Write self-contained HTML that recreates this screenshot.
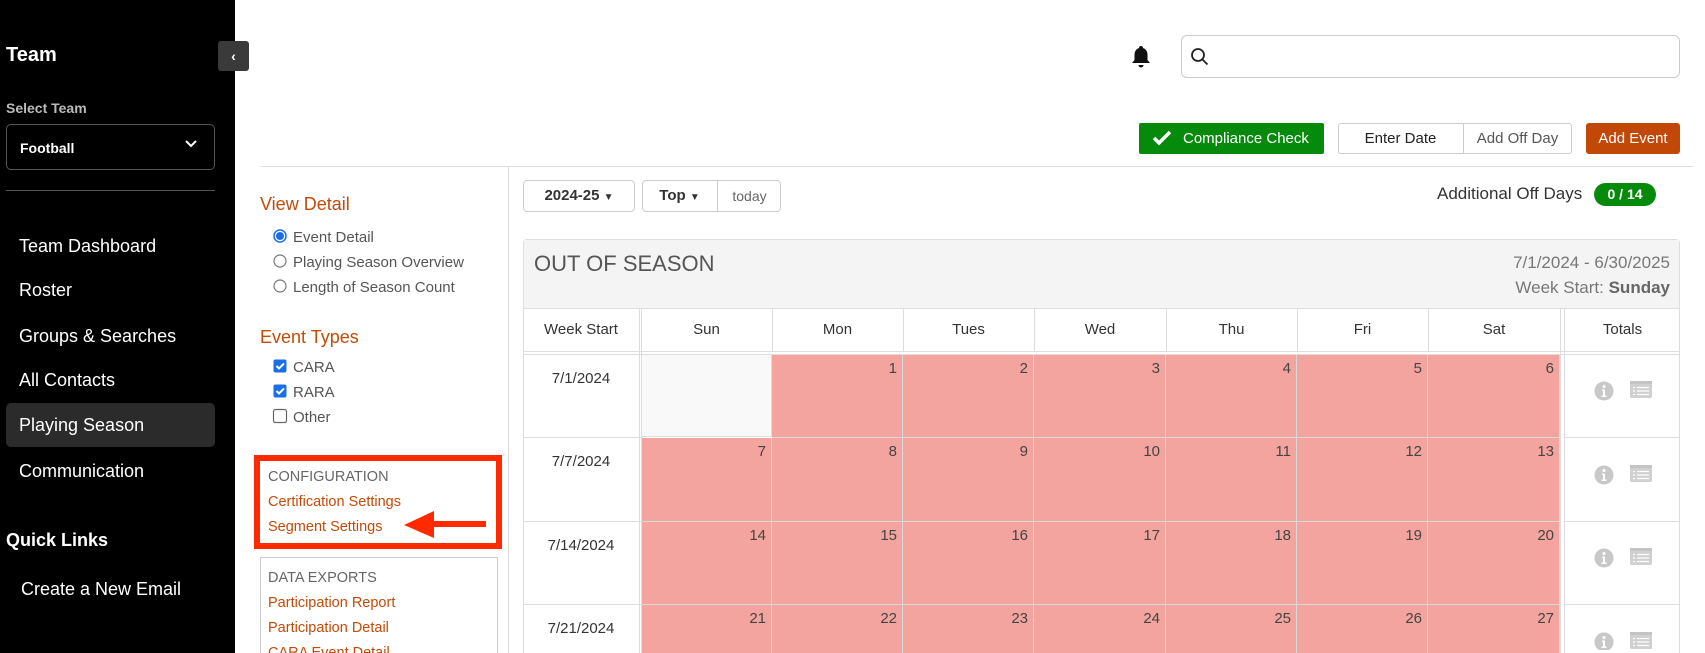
<!DOCTYPE html>
<html style="width:1705px;height:653px;overflow:hidden"><head><meta charset="utf-8"><style>
*{box-sizing:border-box;margin:0;padding:0}
html,body{width:1705px;height:653px;overflow:hidden}
body{background:#fff;font-family:"Liberation Sans",sans-serif;position:relative}
#wrap{position:relative;width:1705px;height:653px;overflow:hidden}
.a{position:absolute;white-space:nowrap}
#sb{position:absolute;left:0;top:0;width:235px;height:653px;background:#000;color:#fff}
.nav{position:absolute;left:19px;font-size:18px;color:#fff}
.or{color:#c44a08}
.gl{background:#ddd;position:absolute}
.cell{position:absolute;background:#f4a49e;border-right:1px solid #d9d9d9;border-bottom:1px solid #d9d9d9}
.num{position:absolute;right:5px;top:5px;font-size:15px;color:#444}
.hd{position:absolute;top:309px;height:42px;line-height:42px;text-align:center;font-size:15px;color:#333}
.wk{position:absolute;left:523px;width:116px;text-align:center;font-size:15px;color:#333}
</style></head><body><div id="wrap">
<div id="sb">
<div class="a" style="left:6px;top:44px;font-size:20px;font-weight:bold">Team</div>
<div class="a" style="left:218px;top:41px;width:31px;height:30px;background:#3a3a3a;border-radius:3px;color:#fff;text-align:center;line-height:30px;font-size:14px;font-weight:bold">&#8249;</div>
<div class="a" style="left:6px;top:100px;font-size:14px;font-weight:bold;color:#bbb">Select Team</div>
<div class="a" style="left:6px;top:124px;width:209px;height:46px;border:1px solid #555;border-radius:5px"></div>
<div class="a" style="left:20px;top:140px;font-size:14px;font-weight:bold">Football</div>
<svg class="a" style="left:184px;top:139px" width="14" height="10"><path d="M2 2l5 5 5-5" stroke="#fff" stroke-width="2" fill="none"/></svg>
<div class="a" style="left:6px;top:190px;width:209px;height:1px;background:#555"></div>
<div class="a" style="left:6px;top:403px;width:209px;height:44px;background:#2b2b2b;border-radius:5px"></div>
<div class="nav" style="top:236px">Team Dashboard</div>
<div class="nav" style="top:280px">Roster</div>
<div class="nav" style="top:326px">Groups &amp; Searches</div>
<div class="nav" style="top:370px">All Contacts</div>
<div class="nav" style="top:415px">Playing Season</div>
<div class="nav" style="top:461px">Communication</div>
<div class="a" style="left:6px;top:530px;font-size:18px;font-weight:bold">Quick Links</div>
<div class="nav" style="left:21px;top:579px">Create a New Email</div>
</div>
<svg class="a" style="left:1130px;top:45px" width="22" height="24" viewBox="0 0 22 24"><path d="M11 1a2 2 0 0 1 2 2c3 1 4.5 3.5 4.5 7v5l2.5 3H2l2.5-3v-5c0-3.5 1.5-6 4.5-7a2 2 0 0 1 2-2z" fill="#111"/><path d="M8.5 20h5a2.5 2.5 0 0 1-5 0z" fill="#111"/></svg>
<div class="a" style="left:1181px;top:35px;width:499px;height:43px;border:1px solid #ccc;border-radius:6px"></div>
<svg class="a" style="left:1190px;top:47px" width="20" height="20"><circle cx="8" cy="8" r="6" stroke="#222" stroke-width="1.8" fill="none"/><path d="M12.5 12.5l5 5" stroke="#222" stroke-width="1.8"/></svg>
<div class="a" style="left:1139px;top:123px;width:185px;height:31px;background:#068a0c;border-radius:2px;color:#fff;font-size:15px;line-height:31px;padding-left:44px">Compliance Check</div>
<svg class="a" style="left:1152px;top:130px" width="20" height="16"><path d="M2 8l5 5 11-11" stroke="#fff" stroke-width="3.5" fill="none"/></svg>
<div class="a" style="left:1338px;top:123px;width:234px;height:31px;border:1px solid #ccc;border-radius:3px"></div>
<div class="a" style="left:1463px;top:123px;width:1px;height:31px;background:#ccc"></div>
<div class="a" style="left:1338px;top:123px;width:125px;line-height:31px;text-align:center;font-size:15px;color:#222">Enter Date</div>
<div class="a" style="left:1463px;top:123px;width:109px;line-height:31px;text-align:center;font-size:15px;color:#555">Add Off Day</div>
<div class="a" style="left:1586px;top:123px;width:94px;height:31px;background:#c24808;border-radius:3px;color:#fff;font-size:15px;line-height:31px;text-align:center">Add Event</div>
<div class="a" style="left:261px;top:166px;width:1432px;height:1px;background:#ddd"></div>
<div class="a" style="left:508px;top:166px;width:1px;height:487px;background:#ddd"></div>

<div class="a or" style="left:260px;top:194px;font-size:18px">View Detail</div>
<svg class="a" style="left:272px;top:228px" width="16" height="70"><circle cx="8" cy="8" r="6" fill="#fff" stroke="#1a6ee6" stroke-width="1.5"/><circle cx="8" cy="8" r="4" fill="#1a6ee6"/><circle cx="8" cy="33" r="6" fill="#fff" stroke="#777" stroke-width="1.2"/><circle cx="8" cy="58" r="6" fill="#fff" stroke="#777" stroke-width="1.2"/></svg>
<div class="a" style="left:293px;top:225px;font-size:15px;color:#555;line-height:25px">Event Detail<br>Playing Season Overview<br>Length of Season Count</div>
<div class="a or" style="left:260px;top:327px;font-size:18px">Event Types</div>
<svg class="a" style="left:272px;top:358px" width="16" height="70"><rect x="1.5" y="1.5" width="13" height="13" rx="2" fill="#1a6ee6"/><path d="M4.5 8l2.5 2.5 5-5" stroke="#fff" stroke-width="2" fill="none"/><rect x="1.5" y="26.5" width="13" height="13" rx="2" fill="#1a6ee6"/><path d="M4.5 33l2.5 2.5 5-5" stroke="#fff" stroke-width="2" fill="none"/><rect x="1.5" y="51.5" width="13" height="13" rx="2" fill="#fff" stroke="#666" stroke-width="1.2"/></svg>
<div class="a" style="left:293px;top:355px;font-size:15px;color:#555;line-height:25px">CARA<br>RARA<br>Other</div>

<div class="a" style="left:254px;top:455px;width:248px;height:94px;border:6px solid #ff2a00"></div>
<div class="a" style="left:268px;top:465px;font-size:14.5px;color:#666;line-height:25px">CONFIGURATION<br><span class="or">Certification Settings<br>Segment Settings</span></div>
<svg class="a" style="left:400px;top:505px" width="90" height="40"><path d="M4 20L34 6v10h52v6H34v11z" fill="#ff2a00"/></svg>
<div class="a" style="left:260px;top:557px;width:238px;height:96px;border:1px solid #ccc;border-bottom:none;overflow:hidden">
<div style="position:absolute;left:7px;top:8px;font-size:14.5px;color:#666;line-height:25px;white-space:nowrap">DATA EXPORTS<br><span class="or">Participation Report<br>Participation Detail<br>CARA Event Detail</span></div></div>

<div class="a" style="left:523px;top:180px;width:112px;height:32px;border:1px solid #ccc;border-radius:4px;text-align:center;line-height:30px;font-size:15px;font-weight:bold;color:#333">2024-25 <span style="font-size:10px">&#9660;</span></div>
<div class="a" style="left:642px;top:180px;width:139px;height:32px;border:1px solid #ccc;border-radius:4px"></div>
<div class="a" style="left:717px;top:180px;width:1px;height:32px;background:#ccc"></div>
<div class="a" style="left:642px;top:180px;width:75px;line-height:32px;text-align:center;font-size:15px;font-weight:bold;color:#333">Top <span style="font-size:10px">&#9660;</span></div>
<div class="a" style="left:718px;top:180px;width:63px;line-height:32px;text-align:center;font-size:14px;color:#666">today</div>
<div class="a" style="left:1437px;top:184px;font-size:17px;color:#333">Additional Off Days</div>
<div class="a" style="left:1594px;top:183px;width:62px;height:23px;background:#068a0c;border-radius:12px;color:#fff;font-weight:bold;font-size:14px;text-align:center;line-height:23px">0 / 14</div>

<div class="a" style="left:523px;top:239px;width:1157px;height:414px;border:1px solid #ddd;border-bottom:none;border-radius:4px 4px 0 0;background:#fff"></div>
<div class="a" style="left:524px;top:240px;width:1155px;height:69px;background:#f4f4f4;border-bottom:1px solid #ddd"></div>
<div class="a" style="left:534px;top:251px;font-size:22px;color:#555">OUT OF SEASON</div>
<div class="a" style="right:35px;top:250px;font-size:17px;color:#777;text-align:right;line-height:25px">7/1/2024 - 6/30/2025<br>Week Start: <b style="color:#666">Sunday</b></div>
<div class="hd" style="left:523px;width:116px">Week Start</div>
<div class="hd" style="left:641px;width:131px">Sun</div>
<div class="hd" style="left:772px;width:131px">Mon</div>
<div class="hd" style="left:903px;width:131px">Tues</div>
<div class="hd" style="left:1034px;width:132px">Wed</div>
<div class="hd" style="left:1166px;width:131px">Thu</div>
<div class="hd" style="left:1297px;width:131px">Fri</div>
<div class="hd" style="left:1428px;width:132px">Sat</div>
<div class="hd" style="left:1565px;width:115px">Totals</div>
<div class="gl" style="left:523px;top:351px;width:1157px;height:1px"></div>
<div class="gl" style="left:523px;top:354px;width:1157px;height:1px"></div>
<div class="gl" style="left:639px;top:309px;width:1px;height:344px"></div>
<div class="gl" style="left:641px;top:309px;width:1px;height:344px"></div>
<div class="gl" style="left:1560px;top:309px;width:1px;height:344px"></div>
<div class="gl" style="left:1564px;top:309px;width:1px;height:344px"></div>
<div class="gl" style="left:772px;top:309px;width:1px;height:42px"></div>
<div class="gl" style="left:903px;top:309px;width:1px;height:42px"></div>
<div class="gl" style="left:1034px;top:309px;width:1px;height:42px"></div>
<div class="gl" style="left:1166px;top:309px;width:1px;height:42px"></div>
<div class="gl" style="left:1297px;top:309px;width:1px;height:42px"></div>
<div class="gl" style="left:1428px;top:309px;width:1px;height:42px"></div>
<div class="gl" style="left:523px;top:437px;width:118px;height:1px"></div>
<div class="gl" style="left:523px;top:521px;width:118px;height:1px"></div>
<div class="gl" style="left:523px;top:604px;width:118px;height:1px"></div>
<div class="gl" style="left:1565px;top:437px;width:115px;height:1px"></div>
<div class="gl" style="left:1565px;top:521px;width:115px;height:1px"></div>
<div class="gl" style="left:1565px;top:604px;width:115px;height:1px"></div>
<div class="wk" style="top:370px">7/1/2024</div>
<div class="wk" style="top:453px">7/7/2024</div>
<div class="wk" style="top:537px">7/14/2024</div>
<div class="wk" style="top:620px">7/21/2024</div>
<div class="a" style="left:642px;top:355px;width:130px;height:82px;background:#f9f9f9;border-right:1px solid #ddd;border-bottom:1px solid #ddd"></div>

<div class="cell" style="left:772px;top:355px;width:131px;height:83px"><span class="num">1</span></div>
<div class="cell" style="left:903px;top:355px;width:131px;height:83px"><span class="num">2</span></div>
<div class="cell" style="left:1034px;top:355px;width:132px;height:83px"><span class="num">3</span></div>
<div class="cell" style="left:1166px;top:355px;width:131px;height:83px"><span class="num">4</span></div>
<div class="cell" style="left:1297px;top:355px;width:131px;height:83px"><span class="num">5</span></div>
<div class="cell" style="left:1428px;top:355px;width:132px;height:83px"><span class="num">6</span></div>

<div class="cell" style="left:642px;top:438px;width:130px;height:84px"><span class="num">7</span></div>
<div class="cell" style="left:772px;top:438px;width:131px;height:84px"><span class="num">8</span></div>
<div class="cell" style="left:903px;top:438px;width:131px;height:84px"><span class="num">9</span></div>
<div class="cell" style="left:1034px;top:438px;width:132px;height:84px"><span class="num">10</span></div>
<div class="cell" style="left:1166px;top:438px;width:131px;height:84px"><span class="num">11</span></div>
<div class="cell" style="left:1297px;top:438px;width:131px;height:84px"><span class="num">12</span></div>
<div class="cell" style="left:1428px;top:438px;width:132px;height:84px"><span class="num">13</span></div>

<div class="cell" style="left:642px;top:522px;width:130px;height:83px"><span class="num">14</span></div>
<div class="cell" style="left:772px;top:522px;width:131px;height:83px"><span class="num">15</span></div>
<div class="cell" style="left:903px;top:522px;width:131px;height:83px"><span class="num">16</span></div>
<div class="cell" style="left:1034px;top:522px;width:132px;height:83px"><span class="num">17</span></div>
<div class="cell" style="left:1166px;top:522px;width:131px;height:83px"><span class="num">18</span></div>
<div class="cell" style="left:1297px;top:522px;width:131px;height:83px"><span class="num">19</span></div>
<div class="cell" style="left:1428px;top:522px;width:132px;height:83px"><span class="num">20</span></div>

<div class="cell" style="left:642px;top:605px;width:130px;height:48px;border-bottom:none"><span class="num">21</span></div>
<div class="cell" style="left:772px;top:605px;width:131px;height:48px;border-bottom:none"><span class="num">22</span></div>
<div class="cell" style="left:903px;top:605px;width:131px;height:48px;border-bottom:none"><span class="num">23</span></div>
<div class="cell" style="left:1034px;top:605px;width:132px;height:48px;border-bottom:none"><span class="num">24</span></div>
<div class="cell" style="left:1166px;top:605px;width:131px;height:48px;border-bottom:none"><span class="num">25</span></div>
<div class="cell" style="left:1297px;top:605px;width:131px;height:48px;border-bottom:none"><span class="num">26</span></div>
<div class="cell" style="left:1428px;top:605px;width:132px;height:48px;border-bottom:none"><span class="num">27</span></div>

<svg class="a" style="left:1590px;top:380px" width="70" height="270">
<defs><g id="ic"><circle cx="14" cy="11" r="9.5" fill="#c8c8c8"/><circle cx="14" cy="6.5" r="1.6" fill="#fff"/><path d="M12 9.5h3v6h1.5v1.5h-5v-1.5h1.5v-4.5h-1z" fill="#fff"/><rect x="40" y="1" width="22" height="17" rx="1.5" fill="#d0d0d0"/><rect x="40" y="1" width="22" height="3" fill="#c4c4c4"/><path d="M43 7.5h2M47 7.5h12M43 11h2M47 11h12M43 14.5h2M47 14.5h12" stroke="#fff" stroke-width="1.2"/></g></defs>
<use href="#ic"/><use href="#ic" y="84"/><use href="#ic" y="167"/><use href="#ic" y="251"/>
</svg>
</div></body></html>
